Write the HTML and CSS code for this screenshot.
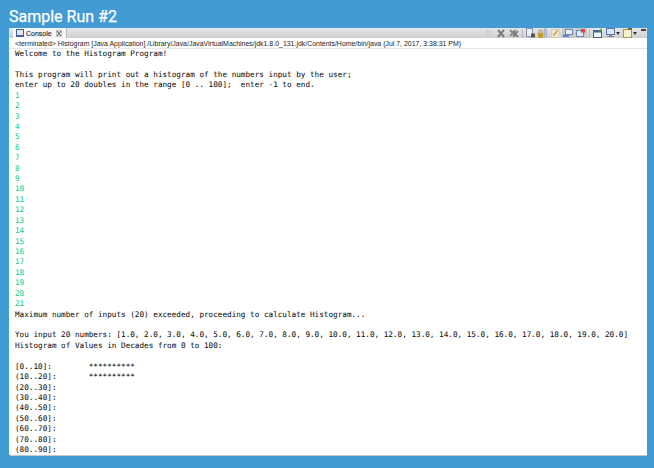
FILE: index.html
```html
<!DOCTYPE html>
<html lang="en">
<head>
<meta charset="utf-8">
<title>Sample Run #2</title>
<link rel="stylesheet" href="styles.css">
</head>
<body>
<h1 class="title">Sample Run #2</h1>
<main class="window">
  <div class="tabbar">
    <div class="tab">
      <svg class="tab-icon" width="8" height="9" viewBox="0 0 8 9"><rect x="0.500" y="0.500" width="7" height="7" fill="#dfe6f2" stroke="#3f5f9f"/><rect x="0" y="6" width="8" height="2" fill="#3f5f9f"/></svg>
      <span>Console</span>
      <svg class="tab-close" width="6" height="7" viewBox="0 0 6 7"><rect x="0.500" y="0.500" width="5" height="6" fill="#e8e8e8" stroke="#aaa" stroke-width=".6"/><path d="M1 1l4 5M5 1L1 6" stroke="#555" stroke-width="1"/></svg>
    </div>
    <div class="tools">
      <svg class="tool" width="8" height="9" viewBox="0 0 8 9"><rect x="1" y="1" width="6" height="7" fill="#d2d2d2"/></svg>
      <svg class="tool wide" width="8" height="9" viewBox="0 0 8 9"><path d="M1 1l6 7M7 1L1 8" stroke="#7c7c7c" stroke-width="2"/></svg>
      <svg class="tool wide" width="10" height="9" viewBox="0 0 10 9"><path d="M1 1l6 6M7 1L1 7" stroke="#8a8a8a" stroke-width="1.800"/><path d="M4 2l5 6M9 2L4 8" stroke="#777" stroke-width="1.600"/></svg>
      <i class="sep"></i>
      <svg class="tool" width="9" height="10" viewBox="0 0 9 10"><rect x="0.500" y="0.500" width="6" height="8" fill="#e8eef5" stroke="#8494ad"/><rect x="5" y="5.500" width="4" height="4" fill="#555"/></svg>
      <svg class="tool" width="9" height="10" viewBox="0 0 9 10"><rect x="0" y="5" width="5" height="5" fill="#c99a2e"/><path d="M1 5V3.500a1.500 1.500 0 0 1 3 0V5" fill="none" stroke="#a67c1e"/><rect x="6" y="1" width="3" height="8" fill="#b8c4d8" stroke="#7b8cab" stroke-width=".5"/></svg>
      <svg class="tool wide" width="9" height="10" viewBox="0 0 9 10"><rect x="0.500" y="1.500" width="8" height="8" fill="#ece6d0" stroke="#d8ceac"/><path d="M2.500 7.500l4-5" stroke="#d0a23c" stroke-width="1.500"/></svg>
      <span class="toggle"><svg width="10" height="9" viewBox="0 0 10 9"><rect x="2.500" y="0.500" width="7" height="5" fill="#e5edf7" stroke="#6e8bb8"/><rect x="0" y="5.500" width="6" height="2.500" fill="#5f86bd"/></svg></span>
      <span class="toggle"><svg width="10" height="9" viewBox="0 0 10 9"><rect x="0.500" y="1.500" width="7" height="6" fill="#dfe7f3" stroke="#6e8bb8"/><rect x="5" y="0" width="4" height="3.500" fill="#d64545"/></svg></span>
      <i class="sep"></i>
      <svg class="tool" width="9" height="10" viewBox="0 0 9 10"><rect x="0.500" y="2.500" width="8" height="7" fill="#eef3f8" stroke="#45658f"/><rect x="0.500" y="2.500" width="8" height="2" fill="#45658f"/><path d="M5 3l4-3v3z" fill="#3fae49"/></svg>
      <svg class="tool wide" width="9" height="10" viewBox="0 0 9 10"><rect x="0.500" y="0.500" width="8" height="6" fill="#dce6f4" stroke="#5577aa"/><rect x="3" y="7" width="3" height="1" fill="#7a8aa5"/><rect x="1" y="8" width="7" height="1" fill="#7a8aa5"/></svg>
      <span class="caret"></span>
      <svg class="tool" width="9" height="10" viewBox="0 0 9 10"><rect x="0.500" y="1.500" width="8" height="8" fill="#f8f0cf" stroke="#a89350"/><rect x="5" y="0" width="4" height="2" fill="#7a6a35"/></svg>
      <span class="caret"></span>
      <span class="minimize"></span>
    </div>
  </div>
  <div class="path">&lt;terminated&gt; Histogram [Java Application] /Library/Java/JavaVirtualMachines/jdk1.8.0_131.jdk/Contents/Home/bin/java (Jul 7, 2017, 3:38:31 PM)</div>
  <pre class="console">Welcome to the Histogram Program!

This program will print out a histogram of the numbers input by the user;
enter up to 20 doubles in the range [0 .. 100];  enter -1 to end.
<span class="input">1
2
3
4
5
6
7
8
9
10
11
12
13
14
15
16
17
18
19
20
21</span>
Maximum number of inputs (20) exceeded, proceeding to calculate Histogram...

You input 20 numbers: [1.0, 2.0, 3.0, 4.0, 5.0, 6.0, 7.0, 8.0, 9.0, 10.0, 11.0, 12.0, 13.0, 14.0, 15.0, 16.0, 17.0, 18.0, 19.0, 20.0]
Histogram of Values in Decades from 0 to 100:

[0..10]:        **********
(10..20]:       **********
(20..30]:
(30..40]:
(40..50]:
(50..60]:
(60..70]:
(70..80]:
(80..90]:</pre>
</main>
</body>
</html>
```

FILE: styles.css
```css
html, body {
  margin: 0;
  padding: 0;
}
body {
  width: 654px;
  height: 468px;
  background: #439bd3;
  overflow: hidden;
  display: flex;
  flex-direction: column;
  font-family: "Liberation Sans", Arial, sans-serif;
}
.title {
  margin: 0;
  height: 28px;
  padding: 6px 0 0 9px;
  box-sizing: border-box;
  font-family: Roboto, sans-serif;
  font-size: 16px;
  line-height: 22px;
  font-weight: 400;
  color: #fff;
  -webkit-text-stroke: 0.25px #fff;
}
.window {
  width: 638px;
  height: 428px;
  margin-left: 9px;
  background: #fff;
  border-bottom: 1px solid #c4c8cb;
  border-bottom-left-radius: 3px;
  box-sizing: border-box;
  overflow: hidden;
  display: flex;
  flex-direction: column;
}
.tabbar {
  height: 10px;
  flex: none;
  display: flex;
  align-items: flex-start;
  justify-content: space-between;
  background: linear-gradient(#e6e6e6, #cfcfcf);
}
.tab {
  height: 10px;
  margin-left: 4px;
  padding: 0 4px 0 3px;
  display: flex;
  align-items: center;
  gap: 2px;
  background: #f6f6f6;
  border-right: 1px solid #bdbdbd;
  font-size: 7px;
  color: #222;
  -webkit-text-stroke: 0.1px #222;
}
.tab-close {
  margin-left: 2px;
}
.tools {
  display: flex;
  align-items: center;
  gap: 3px;
  height: 10px;
  padding-right: 1px;
}
.tool, .toggle svg {
  display: block;
  flex: none;
}
.wide {
  margin-left: 1px;
}
.toggle {
  display: flex;
  align-items: center;
  justify-content: center;
  width: 12px;
  height: 10px;
  margin: 0 -1px;
  background: #c6c6c6;
}
.sep {
  width: 1px;
  height: 9px;
  background: #bcbcbc;
}
.caret {
  width: 0;
  height: 0;
  margin-left: -2px;
  border-left: 2px solid transparent;
  border-right: 2px solid transparent;
  border-top: 3px solid #333;
}
.minimize {
  width: 5px;
  height: 2px;
  margin: -7px 0 0 1px;
  background: #444;
}
.path {
  flex: none;
  height: 9px;
  padding: 1px 0 0 6px;
  font-size: 6.95px;
  line-height: 9px;
  color: #222;
  white-space: nowrap;
  border-bottom: 1px solid #e6e6e6;
}
.console {
  margin: 0;
  padding: 0 0 0 6px;
  font-family: "DejaVu Sans Mono", monospace;
  font-size: 7.67px;
  line-height: 10.42px;
  color: #111;
  -webkit-text-stroke: 0.05px #111;
  white-space: pre;
}
.input {
  color: #10cf8d;
  -webkit-text-stroke-color: #10cf8d;
}
```
